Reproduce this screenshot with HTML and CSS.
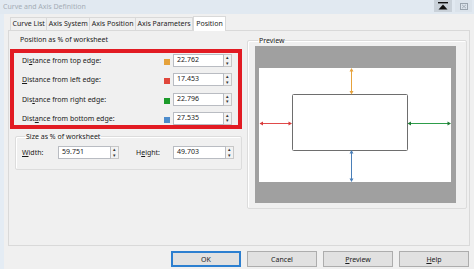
FILE: index.html
```html
<!DOCTYPE html>
<html lang="en">
  <head>
    <meta charset="UTF-8" />
    <meta name="viewport" content="width=device-width, initial-scale=1.0" />
    <title>Curve and Axis Definition</title>
    <link rel="stylesheet" href="styles.css">
  </head>
  <body>
    <div class="window">
      <div class="titlebar">
        <span class="title">Curve and Axis Definition</span>
        <div class="caption-buttons">
          <span class="cap-btn pin">
            <svg width="10" height="8" viewBox="0 0 10 8"><rect x="0" y="0" width="10" height="1.4" fill="#111"/><path d="M5 2.5 L9.5 7.5 L0.5 7.5 Z" fill="#111"/></svg>
          </span>
          <span class="cap-btn close">
            <svg width="8" height="7" viewBox="0 0 8 7"><rect x="0.5" y="0.5" width="7" height="6" fill="none" stroke="#9aa4ae"/><path d="M2 1.8 L6 5.2 M6 1.8 L2 5.2" stroke="#9aa4ae" stroke-width="0.8"/></svg>
          </span>
        </div>
      </div>

      <div class="client">
        <div class="tabs">
          <span class="tab">Curve List</span>
          <span class="tab">Axis System</span>
          <span class="tab">Axis Position</span>
          <span class="tab">Axis Parameters</span>
          <span class="tab active">Position</span>
        </div>

        <div class="panel">
          <div class="left-col">
            <div class="group-caption">Position as % of worksheet</div>
            <div class="highlight">
              <div class="pos-row">
                <span class="label">Di<u>s</u>tance from top edge:</span>
                <span class="swatch orange"></span>
                <span class="spin"><span class="spin-input">22.762</span><span class="spin-arrows"><i>&#9652;</i><i>&#9662;</i></span></span>
              </div>
              <div class="pos-row">
                <span class="label"><u>D</u>istance from left edge:</span>
                <span class="swatch red"></span>
                <span class="spin"><span class="spin-input">17.453</span><span class="spin-arrows"><i>&#9652;</i><i>&#9662;</i></span></span>
              </div>
              <div class="pos-row">
                <span class="label">Dis<u>t</u>ance from right edge:</span>
                <span class="swatch green"></span>
                <span class="spin"><span class="spin-input">22.796</span><span class="spin-arrows"><i>&#9652;</i><i>&#9662;</i></span></span>
              </div>
              <div class="pos-row">
                <span class="label">Dist<u>a</u>nce from bottom edge:</span>
                <span class="swatch blue"></span>
                <span class="spin"><span class="spin-input">27.535</span><span class="spin-arrows"><i>&#9652;</i><i>&#9662;</i></span></span>
              </div>
            </div>

            <fieldset class="group size-group">
              <legend>Size as % of worksheet</legend>
              <div class="size-row">
                <span class="label w-label"><u>W</u>idth:</span>
                <span class="spin"><span class="spin-input">59.751</span><span class="spin-arrows"><i>&#9652;</i><i>&#9662;</i></span></span>
                <span class="label h-label">H<u>e</u>ight:</span>
                <span class="spin"><span class="spin-input">49.703</span><span class="spin-arrows"><i>&#9652;</i><i>&#9662;</i></span></span>
              </div>
            </fieldset>
          </div>

          <fieldset class="group preview-group">
            <legend>Preview</legend>
            <div class="canvas">
              <svg width="201" height="157" viewBox="0 0 201 157">
                <rect x="0" y="0" width="201" height="157" fill="#a0a0a0"/>
                <rect x="4" y="22" width="192" height="114" fill="#fff"/>
                <rect x="37.5" y="48.5" width="115" height="56" rx="1" fill="#fff" stroke="#6e6e6e"/>
                <!-- top -->
                <line x1="96.5" y1="24" x2="96.5" y2="47" stroke="#e6a23c"/>
                <path d="M94.5 25.5 L96.5 22 L98.5 25.5 Z M94.5 45 L96.5 48.5 L98.5 45 Z" fill="#e6a23c"/>
                <!-- bottom -->
                <line x1="96.5" y1="106" x2="96.5" y2="134" stroke="#4a7fb8"/>
                <path d="M94.5 107.5 L96.5 104 L98.5 107.5 Z M94.5 132.5 L96.5 136 L98.5 132.5 Z" fill="#4a7fb8"/>
                <!-- left -->
                <line x1="5" y1="77.5" x2="36" y2="77.5" stroke="#e04a4a"/>
                <path d="M8 75.5 L4.5 77.5 L8 79.5 Z M33.5 75.5 L37 77.5 L33.5 79.5 Z" fill="#d83a3a"/>
                <!-- right -->
                <line x1="154" y1="77.5" x2="195" y2="77.5" stroke="#2d9d4a"/>
                <path d="M156 75.5 L152.5 77.5 L156 79.5 Z M192.5 75.5 L196 77.5 L192.5 79.5 Z" fill="#1f7a34"/>
              </svg>
            </div>
          </fieldset>
        </div>

        <div class="buttons">
          <button class="btn default">OK</button>
          <button class="btn">Cancel</button>
          <button class="btn"><u>P</u>review</button>
          <button class="btn"><u>H</u>elp</button>
        </div>
      </div>
    </div>
  </body>
</html>
```

FILE: styles.css
```css
* {
  box-sizing: border-box;
}

body {
  margin: 0;
  width: 474px;
  height: 269px;
  overflow: hidden;
  background: #f0f0f0;
  font-family: "Noto Sans", "Open Sans", sans-serif;
  font-size: 7px;
  color: #1b1b1b;
}

.window {
  height: 269px;
  border-left: 4px solid #e4ecf4;
}

.titlebar {
  height: 14px;
  margin-left: -4px;
  background: #e1e9f1;
  display: flex;
  align-items: flex-start;
  justify-content: space-between;
}

.title {
  padding: 2px 0 0 3px;
  color: #a5adb6;
  font-size: 7px;
}

.caption-buttons {
  display: flex;
  gap: 3px;
  margin-right: 2px;
}

.cap-btn {
  height: 12px;
  display: flex;
  align-items: center;
  justify-content: center;
}

.cap-btn.pin {
  width: 18px;
  background: #c9d1d9;
}

.cap-btn.close {
  width: 17px;
  background: #dbe3eb;
}

/* client area */
.client {
  padding: 1px 0 0 4px;
}

.tabs {
  display: flex;
  align-items: flex-end;
  height: 15px;
  padding-left: 2px;
}

.tab {
  height: 13px;
  padding: 0 1.5px;
  border: 1px solid #d9d9d9;
  border-bottom: none;
  border-right: none;
  background: #f0f0f0;
  line-height: 12px;
  white-space: nowrap;
}

.tab:nth-child(4) {
  border-right: 1px solid #d9d9d9;
}

.tab.active {
  height: 15px;
  background: #fff;
  border: 1px solid #d9d9d9;
  border-bottom: none;
  margin-bottom: -1px;
  padding: 0 2px;
  line-height: 13px;
  position: relative;
  z-index: 1;
}

.panel {
  width: 462px;
  height: 216px;
  border: 1px solid #d9d9d9;
  background: #f0f0f0;
  display: flex;
  gap: 5px;
  padding: 0 0 0 1px;
}

.left-col {
  width: 232px;
  display: flex;
  flex-direction: column;
}

.group-caption {
  padding: 4px 0 0 10px;
  height: 18px;
  line-height: 10px;
}

.highlight {
  height: 80px;
  border: 4px solid #e21b23;
  padding: 1px 6px 0 8px;
  display: flex;
  flex-direction: column;
  gap: 6.3px;
}

.pos-row {
  display: grid;
  grid-template-columns: 1fr 6px 59px;
  column-gap: 3px;
  align-items: center;
  height: 13px;
}

.label u,
.btn u {
  text-decoration: underline;
  text-underline-offset: 1px;
}

.swatch {
  width: 6px;
  height: 6px;
  margin-top: 3px;
}

.swatch.orange { background: #e5a23b; }
.swatch.red { background: #e0473b; }
.swatch.green { background: #1c9b2b; }
.swatch.blue { background: #4d8ccc; }

.spin {
  display: flex;
  height: 13px;
}

.spin-input {
  flex: 1;
  background: #fff;
  border: 1px solid #b9bcc2;
  padding-left: 3px;
  line-height: 10px;
  font-size: 7px;
}

.spin-arrows {
  width: 8px;
  display: flex;
  flex-direction: column;
  border: 1px solid #c7c7c7;
  border-left: none;
  background: #f2f2f2;
}

.spin-arrows i {
  flex: 1;
  font-style: normal;
  font-size: 5px;
  line-height: 5px;
  text-align: center;
  color: #333;
}

/* group boxes */
.group {
  margin: 0;
  border: 1px solid #dcdcdc;
  border-radius: 2px;
  box-shadow: inset 1px 1px 0 #fff;
}

.group legend {
  padding: 0 1px;
  margin-left: 3px;
  line-height: 9px;
  font-size: 7px;
}

.size-group {
  margin: 3px 0 0 5px;
  width: 227px;
  height: 38px;
  padding: 5px 0 0 6px;
}

.size-row {
  display: flex;
  align-items: center;
  height: 13px;
}

.size-row .spin {
  width: 61px;
}

.w-label {
  width: 36px;
}

.h-label {
  padding-left: 17px;
  box-sizing: content-box;
  width: 37px;
}

.preview-group {
  width: 220px;
  height: 173px;
  margin-top: 5px;
  padding: 1px 10px 0 7px;
}

.canvas {
  width: 201px;
  height: 157px;
}

.canvas svg {
  display: block;
}

/* dialog buttons */
.buttons {
  display: flex;
  justify-content: flex-end;
  gap: 6px;
  width: 461px;
  margin-top: 5px;
}

.btn {
  width: 70px;
  height: 16px;
  padding: 0;
  border: 1px solid #adadad;
  background: #e1e1e1;
  font-family: "Noto Sans", "Open Sans", sans-serif;
  font-size: 7px;
  color: #1b1b1b;
}

.btn.default {
  border: 2px solid #2c7fd0;
}
```
